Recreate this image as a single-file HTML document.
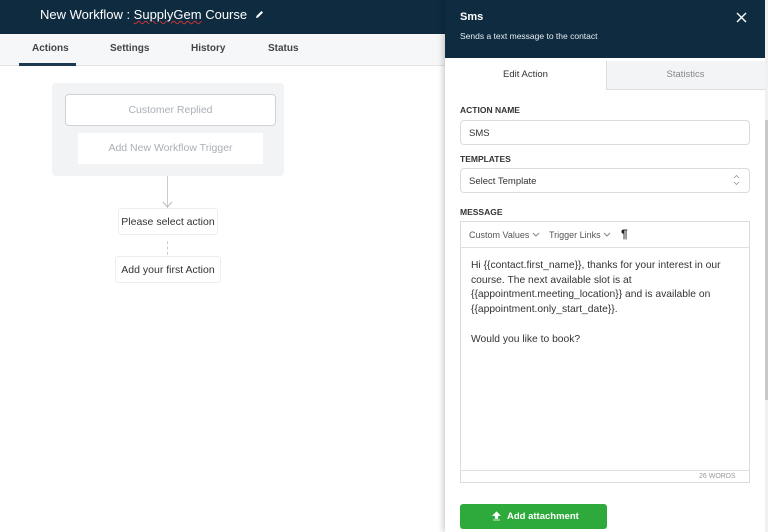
<!DOCTYPE html>
<html><head><meta charset="utf-8"><style>
*{box-sizing:border-box;margin:0;padding:0}
body{width:768px;height:532px;overflow:hidden;background:#fff;font-family:"Liberation Sans",sans-serif;position:relative;color:#333}
.abs{position:absolute}
.hdr{left:0;top:0;width:768px;height:34px;background:#0f2b40}
.title{left:40px;top:7px;color:#fff;font-size:13px}
.tabs{left:0;top:34px;width:445px;height:32px;background:#f6f7f8;border-bottom:1px solid #e3e3e3}
.tab{top:43px;font-size:10px;font-weight:bold;color:#444}
.card{left:52px;top:83px;width:232px;height:93px;background:#f2f3f4;border-radius:4px}
.panel{left:445px;top:0;width:320px;height:532px;background:#fff;box-shadow:-2px 0 6px rgba(0,0,0,.2)}
.lbl{left:460px;font-size:8.5px;font-weight:bold;color:#333}
.inp{left:460px;width:290px;height:25px;border:1px solid #d8dbe0;border-radius:4px;font-size:9.5px;padding:7px 8px;color:#333}
</style></head><body>
<div class="abs hdr"></div>
<div class="abs title">New Workflow : <span style="text-decoration:underline wavy #c33;text-decoration-thickness:1px">SupplyGem</span> Course</div>
<svg class="abs" style="left:254px;top:9px" width="11" height="11" viewBox="0 0 11 11"><path d="M2 9 L2.5 7 L7.5 2 L9 3.5 L4 8.5 Z" fill="#fff"/></svg>
<div class="abs tabs"></div>
<div class="abs tab" style="left:32px">Actions</div>
<div class="abs tab" style="left:110px">Settings</div>
<div class="abs tab" style="left:191px">History</div>
<div class="abs tab" style="left:268px">Status</div>
<div class="abs" style="left:19px;top:63px;width:57px;height:3px;background:#1d3a50"></div>
<div class="abs card"></div>
<div class="abs" style="left:65px;top:94px;width:211px;height:32px;background:#fff;border:1px solid #cfd3d8;border-radius:4px;text-align:center;line-height:31px;font-size:10.5px;color:#aab0b7">Customer Replied</div>
<div class="abs" style="left:78px;top:133px;width:185px;height:31px;background:#fff;text-align:center;line-height:31px;font-size:10.5px;color:#aab0b7">Add New Workflow Trigger</div>
<div class="abs" style="left:167px;top:176px;width:1px;height:32px;background:#ccc"></div>
<svg class="abs" style="left:162px;top:201px" width="11" height="7"><path d="M1 1 L5.5 6 L10 1" fill="none" stroke="#bbb"/></svg>
<div class="abs" style="left:118px;top:208px;width:100px;height:27px;border:1px solid #eceef0;border-radius:3px;text-align:center;line-height:26px;font-size:10.5px;color:#333">Please select action</div>
<div class="abs" style="left:167px;top:241px;width:0;height:14px;border-left:1px dashed #ccc"></div>
<div class="abs" style="left:115px;top:256px;width:106px;height:27px;border:1px solid #eceef0;border-radius:3px;text-align:center;line-height:26px;font-size:10.5px;color:#333">Add your first Action</div>

<div class="abs panel"></div>
<div class="abs" style="left:445px;top:0;width:320px;height:58px;background:#0f2b40"></div>
<div class="abs" style="left:460px;top:11px;color:#fff;font-size:11px;font-weight:bold">Sms</div>
<div class="abs" style="left:460px;top:31px;color:#e6ecf0;font-size:8.5px">Sends a text message to the contact</div>
<svg class="abs" style="left:736px;top:12px" width="11" height="11"><path d="M1 1 L10 10 M10 1 L1 10" stroke="#fff" stroke-width="1.4"/></svg>
<div class="abs" style="left:606px;top:61px;width:159px;height:29px;background:#f3f4f5;border-left:1px solid #ddd;border-bottom:1px solid #ddd"></div>
<div class="abs" style="left:445px;top:69px;width:161px;text-align:center;font-size:9.5px;color:#333">Edit Action</div>
<div class="abs" style="left:606px;top:69px;width:159px;text-align:center;font-size:9.5px;color:#888">Statistics</div>
<div class="abs lbl" style="top:105px">ACTION NAME</div>
<div class="abs inp" style="top:120px">SMS</div>
<div class="abs lbl" style="top:154px">TEMPLATES</div>
<div class="abs inp" style="top:168px">Select Template</div>
<svg class="abs" style="left:733px;top:174px" width="7" height="12"><path d="M1 4 L3.5 1.5 L6 4 M1 8 L3.5 10.5 L6 8" fill="none" stroke="#999" stroke-width=".8"/></svg>
<div class="abs lbl" style="top:207px">MESSAGE</div>
<div class="abs" style="left:460px;top:221px;width:290px;height:262px;border:1px solid #d8dbe0"></div>
<div class="abs" style="left:460px;top:247px;width:290px;height:1px;background:#e0e0e0"></div>
<div class="abs" style="left:469px;top:230px;font-size:9px;color:#555">Custom Values</div>
<svg class="abs" style="left:532px;top:232px" width="8" height="6"><path d="M1 1 L4 4 L7 1" fill="none" stroke="#888"/></svg>
<div class="abs" style="left:549px;top:230px;font-size:9px;color:#555">Trigger Links</div>
<svg class="abs" style="left:603px;top:232px" width="8" height="6"><path d="M1 1 L4 4 L7 1" fill="none" stroke="#888"/></svg>
<div class="abs" style="left:621px;top:227px;font-size:12px;font-weight:bold;color:#222">¶</div>
<div class="abs" style="left:471px;top:259px;width:275px;font-size:10.3px;line-height:14.7px;color:#333">Hi {{contact.first_name}}, thanks for your interest in our course. The next available slot is at {{appointment.meeting_location}} and is available on {{appointment.only_start_date}}.<br><br>Would you like to book?</div>
<div class="abs" style="left:460px;top:470px;width:290px;height:1px;background:#e0e0e0"></div>
<div class="abs" style="left:699px;top:473px;font-size:7px;color:#999">26 WORDS</div>
<div class="abs" style="left:460px;top:504px;width:147px;height:25px;background:#2eaa3c;border-radius:3px;color:#fff;font-size:9.5px;font-weight:bold;line-height:25px;padding-left:47px">Add attachment</div>
<svg class="abs" style="left:492px;top:511px" width="9" height="10"><path d="M4.5 1 L1 4.5 H3.3 V7.5 H5.7 V4.5 H8 Z M1 9 H8" fill="#fff" stroke="#fff" stroke-width=".8"/></svg>
<div class="abs" style="left:765px;top:0;width:3px;height:532px;background:#f0f0f0"></div>
<div class="abs" style="left:765px;top:120px;width:3px;height:280px;background:#c8c8c8"></div>
</body></html>
